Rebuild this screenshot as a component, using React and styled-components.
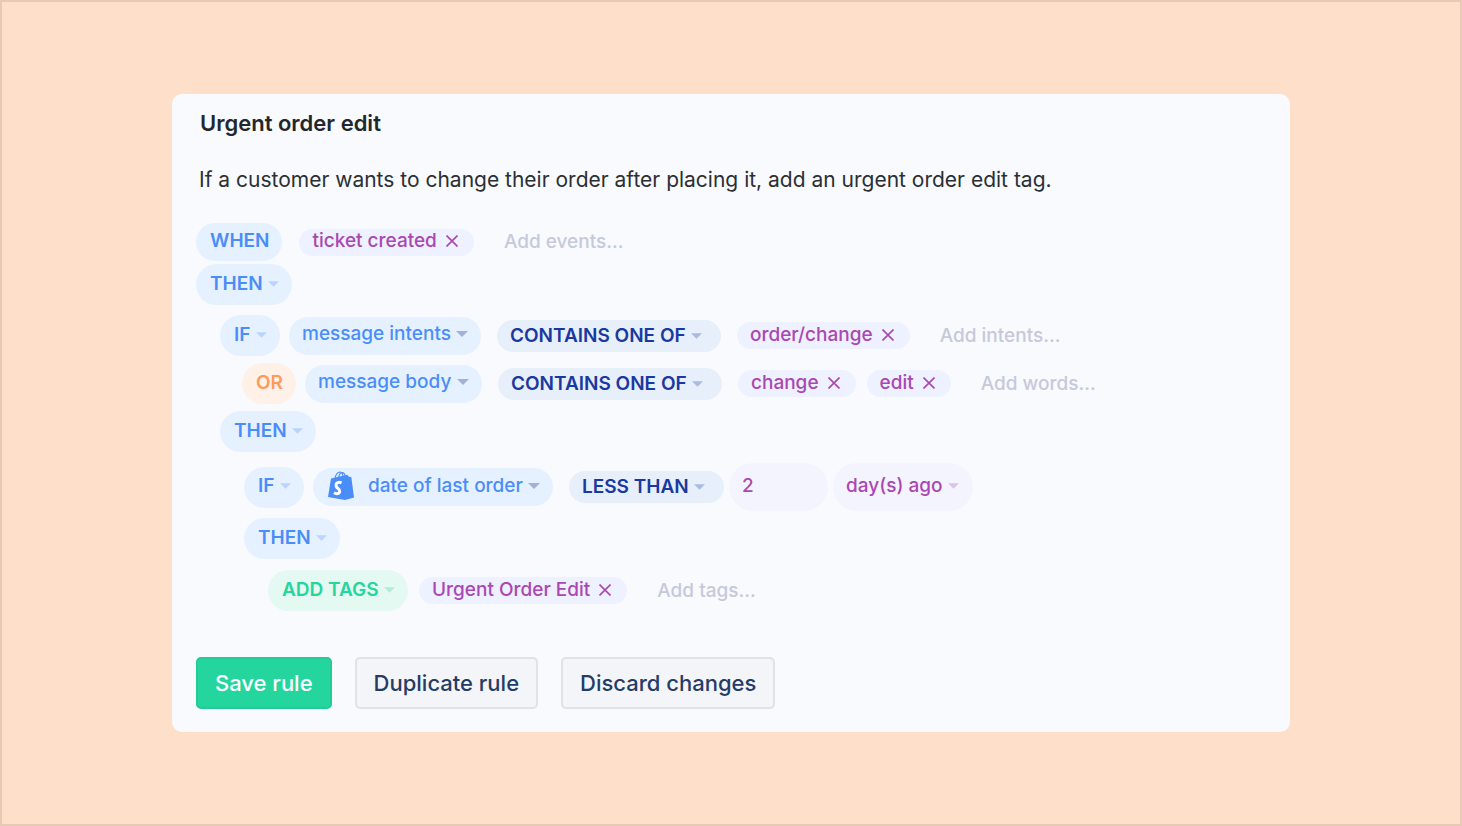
import React, { useState } from 'react';
import styled, { createGlobalStyle } from 'styled-components';

const GlobalStyle = createGlobalStyle`
  * {
    box-sizing: border-box;
  }
  body {
    margin: 0;
    font-family: Inter, 'Liberation Sans', sans-serif;
  }
  button,
  input,
  select {
    font-family: inherit;
  }
`;

const Page = styled.div`
  display: flex;
  flex-direction: column;
  min-height: 100vh;
  padding: 92px 170px;
  border: 2px solid #e6cab5;
  background: #fddfca;
`;

const Card = styled.main`
  flex: 1;
  padding: 13px 24px 20px;
  border-radius: 10px;
  background: #f8fafe;
`;

const Title = styled.h1`
  margin: 0 0 26px;
  padding-left: 4px;
  color: #23272c;
  font-size: 22px;
  font-weight: 600;
  line-height: 32px;
`;

const Description = styled.p`
  margin: 0 0 28px;
  padding-left: 3px;
  color: #2b2f34;
  font-size: 21px;
  line-height: 30px;
`;

const Rule = styled.form`
  margin: 0;
`;

const Block = styled.div`
  display: flex;
  flex-direction: column;
  gap: ${(props) => (props.$tight ? '3px' : '7px')};
`;

const Nested = styled(Block)`
  margin: ${(props) => (props.$first ? '10px' : '4px')} 0 0 24px;
`;

const Row = styled.div`
  display: flex;
  align-items: center;
  gap: 5px;
  padding-left: ${(props) => (props.$indent ? '22px' : '0')};
`;

const Pill = styled.label`
  display: inline-flex;
  align-items: center;
  flex-shrink: 0;
  gap: 5px;
  border-radius: 24px;
  font-size: 19px;
  line-height: 24px;
`;

const tones = {
  blue: { background: '#e6f1ff', color: '#4b8df8', caret: '#b9d4ff' },
  orange: { background: '#fff0e8', color: '#fd9b5a', caret: '#fdd0b0' },
  green: { background: '#e3f9f1', color: '#24d69d', caret: '#b0eed9' },
};

const Keyword = styled(Pill)`
  height: ${(props) => (props.$short ? '38px' : '41px')};
  margin-right: 4px;
  padding: 0 13px 2px 14px;
  background: ${(props) => tones[props.$tone].background};
  color: ${(props) => tones[props.$tone].color};
  font-weight: 600;
`;

const Field = styled(Pill)`
  height: 38px;
  padding: 0 13px 3px;
  background: #e6f1ff;
  color: #4b8df8;
  font-weight: 500;
`;

const Operator = styled(Pill)`
  height: 32px;
  margin-left: 11px;
  padding: 0 19px 0 13px;
  background: #e7effb;
  color: #1a39a0;
  font-weight: 600;
`;

const Value = styled(Pill)`
  height: 48px;
  padding: 0 14px 2px 13px;
  background: #f4f4fe;
  color: #ab47b1;
  font-weight: 500;
`;

const Select = styled.select`
  appearance: none;
  margin: 0;
  padding: 0;
  border: none;
  outline: none;
  background: none;
  color: inherit;
  font-size: inherit;
  font-weight: inherit;
  line-height: inherit;
  cursor: pointer;
`;

const NumberInput = styled.input`
  width: 72px;
  padding: 0;
  border: none;
  outline: none;
  background: none;
  color: inherit;
  font-size: inherit;
  font-weight: inherit;
  line-height: inherit;
`;

const Tags = styled.div`
  display: flex;
  align-items: center;
  gap: 11px;
  margin-left: ${(props) => props.$space}px;
`;

const TagPill = styled.span`
  display: inline-flex;
  align-items: center;
  flex-shrink: 0;
  gap: 9px;
  height: 27px;
  padding: 0 16px 2px 13px;
  border-radius: 14px;
  background: #eef1ff;
  color: #ab47b1;
  font-size: 19px;
  font-weight: 500;
  line-height: 24px;
`;

const RemoveButton = styled.button`
  display: flex;
  padding: 0;
  border: none;
  background: none;
  color: inherit;
  cursor: pointer;
`;

const AddInput = styled.input`
  width: 180px;
  margin-left: 19px;
  padding: 0;
  border: none;
  outline: none;
  background: none;
  color: #ab47b1;
  font-size: 19px;
  font-weight: 500;
  line-height: 24px;

  &::placeholder {
    color: #c6c9da;
    opacity: 1;
  }
`;

const IconSlot = styled.span`
  display: flex;
  margin: 0 9px 0 2px;
`;

const Actions = styled.div`
  display: flex;
  flex-wrap: wrap;
  gap: 23px;
  margin-top: 46px;
`;

const Button = styled.button`
  height: 52px;
  padding: 0 17px;
  border: 2px solid ${(props) => (props.$primary ? '#22cc95' : '#e0e2e8')};
  border-radius: 5px;
  background: ${(props) => (props.$primary ? '#24d69d' : '#f4f5f8')};
  color: ${(props) => (props.$primary ? '#ffffff' : '#253c66')};
  font-size: 22px;
  font-weight: 500;
  line-height: 28px;
  cursor: pointer;
`;

const Caret = ({ color, size = 11 }) => (
  <svg width={size} height="6" viewBox="0 0 12 6" aria-hidden="true">
    <path d="M0 0h12L6 6z" fill={color} />
  </svg>
);

const Cross = () => (
  <svg width="12" height="12" viewBox="0 0 12 12" aria-hidden="true">
    <path d="M.5.5l11 11M11.5.5l-11 11" stroke="currentColor" strokeWidth="1.6" fill="none" />
  </svg>
);

const ShopifyBag = () => (
  <svg width="26" height="29" viewBox="0 0 26 29" aria-hidden="true">
    <path
      d="M7 7.5C7.6 4 9.800 1.200 12 1c1.900-.1 2.900 2.300 2.900 5.300M10.500 6.700C11 3.800 12.500 1.700 14.200 1.600c1.700 0 2.700 1.800 2.900 3.600"
      stroke="#4b8df8"
      strokeWidth="1.1"
      fill="none"
    />
    <path d="M3 7.600l15-3.600 1.200-.2 1.800 2 2.300.3L26 26.500 17 29 0 26z" fill="#4b8df8" />
    <path
      d="M13.600 11.800c-2.900-1.300-5.600-.1-5.600 2.500 0 3.200 4 3.300 3.700 6.100-.3 2.700-3.400 2.800-5.700 1.400"
      stroke="#ffffff"
      strokeWidth="3"
      fill="none"
    />
  </svg>
);

function Dropdown({ label, value, caret, size }) {
  return (
    <>
      <Select aria-label={label} defaultValue={value}>
        <option>{value}</option>
      </Select>
      <Caret color={caret} size={size} />
    </>
  );
}

function KeywordSelect({ tone = 'blue', value }) {
  return (
    <Keyword $tone={tone}>
      <Dropdown label="Statement" value={value} caret={tones[tone].caret} />
    </Keyword>
  );
}

function TagList({ initial, placeholder, space }) {
  const [tags, setTags] = useState(initial);
  const [text, setText] = useState('');

  const handleKeyDown = (e) => {
    if (e.key === 'Enter') {
      e.preventDefault();
      if (text.trim()) {
        setTags([...tags, text.trim()]);
        setText('');
      }
    }
  };

  return (
    <Tags $space={space}>
      {tags.map((tag) => (
        <TagPill key={tag}>
          {tag}
          <RemoveButton
            type="button"
            aria-label={`Remove ${tag}`}
            onClick={() => setTags(tags.filter((t) => t !== tag))}
          >
            <Cross />
          </RemoveButton>
        </TagPill>
      ))}
      <AddInput
        aria-label={placeholder}
        placeholder={placeholder}
        value={text}
        onChange={(e) => setText(e.target.value)}
        onKeyDown={handleKeyDown}
      />
    </Tags>
  );
}

function App() {
  return (
    <Page>
      <GlobalStyle />
      <Card>
        <Title>Urgent order edit</Title>
        <Description>
          If a customer wants to change their order after placing it, add an urgent order edit tag.
        </Description>

        <Rule onSubmit={(e) => e.preventDefault()}>
          <Block $tight>
            <Row>
              <Keyword as="span" $tone="blue" $short>WHEN</Keyword>
              <TagList initial={['ticket created']} placeholder="Add events..." space={8} />
            </Row>
            <Row>
              <KeywordSelect value="THEN" />
            </Row>
          </Block>

          <Nested $first>
            <Row>
              <KeywordSelect value="IF" />
              <Field>
                <Dropdown label="Field" value="message intents" caret="#a5b0d6" size={12} />
              </Field>
              <Operator>
                <Dropdown label="Operator" value="CONTAINS ONE OF" caret="#a9bbe2" />
              </Operator>
              <TagList initial={['order/change']} placeholder="Add intents..." space={11} />
            </Row>
            <Row $indent>
              <Keyword as="span" $tone="orange">OR</Keyword>
              <Field>
                <Dropdown label="Field" value="message body" caret="#a5b0d6" size={12} />
              </Field>
              <Operator>
                <Dropdown label="Operator" value="CONTAINS ONE OF" caret="#a9bbe2" />
              </Operator>
              <TagList initial={['change', 'edit']} placeholder="Add words..." space={11} />
            </Row>
            <Row>
              <KeywordSelect value="THEN" />
            </Row>

            <Nested>
              <Row>
                <KeywordSelect value="IF" />
                <Field>
                  <IconSlot>
                    <ShopifyBag />
                  </IconSlot>
                  <Dropdown label="Field" value="date of last order" caret="#a5b0d6" size={12} />
                </Field>
                <Operator>
                  <Dropdown label="Operator" value="LESS THAN" caret="#a9bbe2" />
                </Operator>
                <Value>
                  <NumberInput aria-label="Amount" defaultValue="2" />
                </Value>
                <Value>
                  <Dropdown label="Unit" value="day(s) ago" caret="#e0c1ea" />
                </Value>
              </Row>
              <Row>
                <KeywordSelect value="THEN" />
              </Row>

              <Nested>
                <Row>
                  <KeywordSelect tone="green" value="ADD TAGS" />
                  <TagList initial={['Urgent Order Edit']} placeholder="Add tags..." space={2} />
                </Row>
              </Nested>
            </Nested>
          </Nested>

          <Actions>
            <Button type="submit" $primary>Save rule</Button>
            <Button type="button">Duplicate rule</Button>
            <Button type="button">Discard changes</Button>
          </Actions>
        </Rule>
      </Card>
    </Page>
  );
}

export default App;
